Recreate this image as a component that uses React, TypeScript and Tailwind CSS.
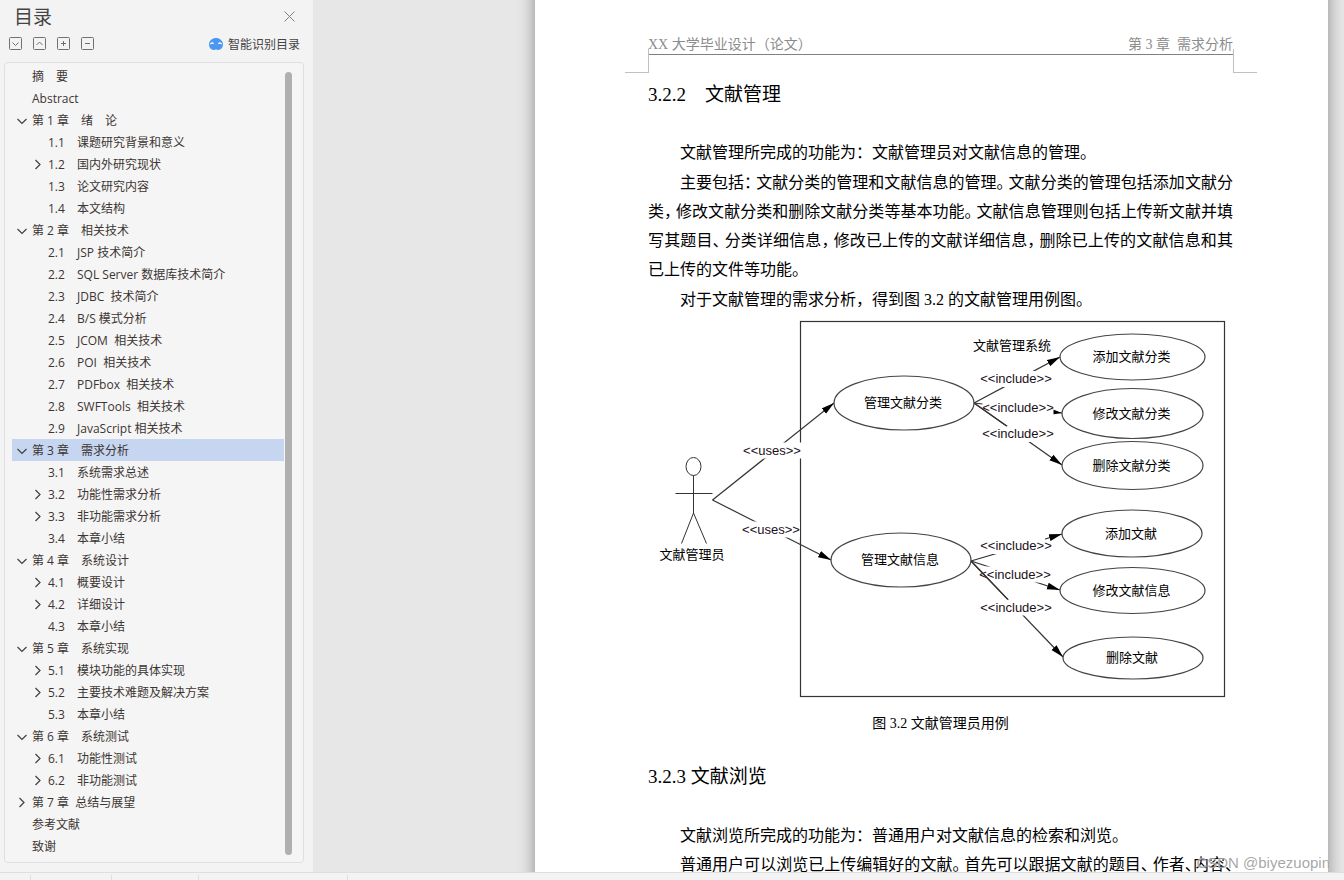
import React from "react";

type Entry = {
  num?: string;
  title: string;
  level: 1 | 2;
  state?: "open" | "closed";
  active?: boolean;
};

const entries: Entry[] = [
  { title: "摘　要", level: 1 },
  { title: "Abstract", level: 1 },
  { title: "第 1 章　绪　论", level: 1, state: "open" },
  { num: "1.1", title: "课题研究背景和意义", level: 2 },
  { num: "1.2", title: "国内外研究现状", level: 2, state: "closed" },
  { num: "1.3", title: "论文研究内容", level: 2 },
  { num: "1.4", title: "本文结构", level: 2 },
  { title: "第 2 章　相关技术", level: 1, state: "open" },
  { num: "2.1", title: "JSP 技术简介", level: 2 },
  { num: "2.2", title: "SQL Server 数据库技术简介", level: 2 },
  { num: "2.3", title: "JDBC  技术简介", level: 2 },
  { num: "2.4", title: "B/S 模式分析", level: 2 },
  { num: "2.5", title: "JCOM  相关技术", level: 2 },
  { num: "2.6", title: "POI  相关技术", level: 2 },
  { num: "2.7", title: "PDFbox  相关技术", level: 2 },
  { num: "2.8", title: "SWFTools  相关技术", level: 2 },
  { num: "2.9", title: "JavaScript 相关技术", level: 2 },
  { title: "第 3 章　需求分析", level: 1, state: "open", active: true },
  { num: "3.1", title: "系统需求总述", level: 2 },
  { num: "3.2", title: "功能性需求分析", level: 2, state: "closed" },
  { num: "3.3", title: "非功能需求分析", level: 2, state: "closed" },
  { num: "3.4", title: "本章小结", level: 2 },
  { title: "第 4 章　系统设计", level: 1, state: "open" },
  { num: "4.1", title: "概要设计", level: 2, state: "closed" },
  { num: "4.2", title: "详细设计", level: 2, state: "closed" },
  { num: "4.3", title: "本章小结", level: 2 },
  { title: "第 5 章　系统实现", level: 1, state: "open" },
  { num: "5.1", title: "模块功能的具体实现", level: 2, state: "closed" },
  { num: "5.2", title: "主要技术难题及解决方案", level: 2, state: "closed" },
  { num: "5.3", title: "本章小结", level: 2 },
  { title: "第 6 章　系统测试", level: 1, state: "open" },
  { num: "6.1", title: "功能性测试", level: 2, state: "closed" },
  { num: "6.2", title: "非功能测试", level: 2, state: "closed" },
  { title: "第 7 章  总结与展望", level: 1, state: "closed" },
  { title: "参考文献", level: 1 },
  { title: "致谢", level: 1 },
];

const tools = [
  { label: "展开", d: "M3.5 5.5 6.5 8.5 9.5 5.5" },
  { label: "收起", d: "M3.5 8 6.5 5 9.5 8" },
  { label: "增加级别", d: "M6.5 4v5M4 6.5h5" },
  { label: "减少级别", d: "M4 6.5h5" },
];

function Chevron({ state }: { state?: "open" | "closed" }) {
  if (!state) return <span className="w-3 shrink-0" />;
  return (
    <button
      type="button"
      aria-label={state === "open" ? "折叠" : "展开"}
      className="flex h-3 w-3 shrink-0 items-center justify-center"
    >
      <svg width="12" height="12" viewBox="0 0 12 12" fill="none" stroke="#404040" strokeWidth="1.2">
        <path d={state === "open" ? "M1.5 4 6 8.5 10.5 4" : "M3.5 1 8 5.5 3.5 10"} />
      </svg>
    </button>
  );
}

function Sidebar() {
  return (
    <aside className="flex w-[313px] shrink-0 flex-col bg-[#f3f3f3] font-['Open_Sans','Noto_Sans_CJK_SC',sans-serif] text-xs text-[#3c3533]">
      <div className="flex h-[33px] items-center justify-between pl-[14px] pr-[18px]">
        <h1 className="text-[19px] leading-7 text-[#444444]">目录</h1>
        <button type="button" aria-label="关闭">
          <svg width="11" height="11" viewBox="0 0 11 11" fill="none" stroke="#808080" strokeWidth="1">
            <path d="M.5.5l10 10M10.5.5l-10 10" />
          </svg>
        </button>
      </div>
      <div className="flex h-[21px] items-center justify-between pl-[9px] pr-[13px]">
        <div className="flex gap-[11px]">
          {tools.map((t) => (
            <button key={t.label} type="button" aria-label={t.label}>
              <svg width="13" height="13" viewBox="0 0 13 13" fill="none" stroke="#707070" strokeWidth="1">
                <rect x=".5" y=".5" width="12" height="12" rx="1" />
                <path d={t.d} />
              </svg>
            </button>
          ))}
        </div>
        <button type="button" className="flex items-center gap-[5px] text-[#444444]">
          <svg width="14" height="12" viewBox="0 0 14 12">
            <path
              d="M7 0C10.5 0 14 2.6 14 6.3 14 10 11.5 12 9.3 12 8.2 12 7.8 11.4 7 11.4S5.8 12 4.7 12C2.5 12 0 10 0 6.3 0 2.6 3.5 0 7 0Z"
              fill="#4a98f0"
            />
            <path d="M1.2 6 3.4 4.8 4.6 5.800M9.400 5.800 10.600 4.800 12.800 6" fill="none" stroke="#ffffff" strokeWidth="1.200" />
          </svg>
          <span className="pt-[2px] leading-5">智能识别目录</span>
        </button>
      </div>
      <nav
        aria-label="目录"
        className="ml-1 mr-[9px] mt-2 flex rounded border border-[#dfdfdf] bg-[#f5f5f5] pb-[5px] pl-[7px] pr-[11px] pt-[2px]"
      >
        <ul className="mr-px flex-1">
          {entries.map((e, i) => (
            <li
              key={i}
              className={`flex h-[22px] items-center gap-1 pt-[2px] ${e.level === 1 ? "pl-1" : "pl-5"} ${
                e.active ? "bg-[#c7d6f0]" : ""
              }`}
            >
              <Chevron state={e.state} />
              <a href="#" className="flex whitespace-pre leading-5">
                {e.num && <span className="w-[29px]">{e.num}</span>}
                <span>{e.title}</span>
              </a>
            </li>
          ))}
        </ul>
        <div className="mb-[2px] mt-[7px] w-[7px] rounded-full bg-[#b0b0b2]" />
      </nav>
    </aside>
  );
}

/* Half-width punctuation, as set in a compressed line. */
function P({ children, tight }: { children: React.ReactNode; tight?: boolean }) {
  return <span className={`[font-feature-settings:'halt'] ${tight ? "" : "mr-1"}`}>{children}</span>;
}

function Line({ children, indent }: { children: React.ReactNode; indent?: boolean }) {
  return (
    <span className={`block whitespace-nowrap [text-align-last:justify] ${indent ? "pl-8" : ""}`}>{children}</span>
  );
}

const useCases = [
  { x: 904, y: 403, rx: 70, ry: 27, t: "管理文献分类" },
  { x: 901, y: 560, rx: 70, ry: 27, t: "管理文献信息" },
  { x: 1132.5, y: 357, rx: 72.5, ry: 23, t: "添加文献分类" },
  { x: 1132.5, y: 413.5, rx: 70.5, ry: 25, t: "修改文献分类" },
  { x: 1132.5, y: 465.5, rx: 70.5, ry: 24, t: "删除文献分类" },
  { x: 1132, y: 533.5, rx: 70, ry: 23.5, t: "添加文献" },
  { x: 1132.5, y: 590.5, rx: 72.5, ry: 23, t: "修改文献信息" },
  { x: 1133, y: 658, rx: 70, ry: 21, t: "删除文献" },
];

/* Drawn in order: a later line may run across an earlier label. */
const links = [
  { x1: 712.5, y1: 500, x2: 834, y2: 403, lx: 772, ly: 450.5, w: 60, t: "<<uses>>" },
  { x1: 712.5, y1: 500, x2: 831, y2: 560, lx: 771, ly: 529.5, w: 58, t: "<<uses>>" },
  { x1: 974, y1: 403, x2: 1060, y2: 357, lx: 1016, ly: 379, w: 70, t: "<<include>>" },
  { x1: 974, y1: 403, x2: 1062, y2: 413, lx: 1018, ly: 407.5, w: 71, t: "<<include>>" },
  { x1: 974, y1: 403, x2: 1062, y2: 465, lx: 1018, ly: 434, w: 70, t: "<<include>>" },
  { x1: 971, y1: 561, x2: 1062, y2: 534, lx: 1016, ly: 546, w: 58, t: "<<include>>" },
  { x1: 971, y1: 561, x2: 1060, y2: 590, lx: 1015, ly: 574.5, w: 70, t: "<<include>>" },
  { x1: 971, y1: 561, x2: 1063, y2: 657, lx: 1016, ly: 607.5, w: 70, t: "<<include>>" },
];

function Diagram() {
  return (
    <svg
      viewBox="648 314 585 396"
      className="block w-full font-['Liberation_Sans','Noto_Sans_CJK_SC',sans-serif] text-[13px]"
      role="img"
      aria-label="文献管理用例图"
      textAnchor="middle"
    >
      <defs>
        <marker id="arrow" markerWidth="13" markerHeight="8" refX="13" refY="4" orient="auto" markerUnits="userSpaceOnUse">
          <path d="M0 .5 13 4 0 7.5Z" fill="#000" />
        </marker>
      </defs>
      <rect x="800.5" y="321.5" width="424" height="375" fill="none" stroke="#333" strokeWidth="1.2" />
      <g fill="none" stroke="#333">
        <ellipse cx="693.5" cy="466.5" rx="7.5" ry="9" />
        <path d="M693.5 475.5V513.5M675.5 493.500H712.500M693.500 513 681.500 543.500M693.500 513 706.500 543.500" />
      </g>
      <text x="692" y="559">文献管理员</text>
      <text x="1012" y="350">文献管理系统</text>
      {links.map((l, i) => (
        <g key={i}>
          <line x1={l.x1} y1={l.y1} x2={l.x2} y2={l.y2} stroke="#333" strokeWidth="1.2" markerEnd="url(#arrow)" />
          <rect x={l.lx - l.w / 2} y={l.ly - 8} width={l.w} height="16" fill="#fff" />
          <text x={l.lx} y={l.ly + 4} fill="#1a1020">
            {l.t}
          </text>
        </g>
      ))}
      <path d="M974 403 1007 426.3M971 561 1008 599.6" stroke="#333" strokeWidth="1.2" />
      {useCases.map((u) => (
        <g key={u.t + u.y}>
          <ellipse cx={u.x} cy={u.y} rx={u.rx} ry={u.ry} fill="none" stroke="#444" strokeWidth="1.2" />
          <text x={u.x - 1} y={u.y + 4}>
            {u.t}
          </text>
        </g>
      ))}
    </svg>
  );
}

function Page() {
  return (
    <article className="-mt-8 min-h-[1122px] min-w-0 max-w-[794px] flex-1 bg-white pl-[113px] pr-[95px] pt-[68px] font-['Liberation_Serif','Noto_Sans_CJK_SC',serif] text-base leading-[29px] text-black shadow-[0_0_16px_rgba(0,0,0,0.4)]">
      <header className="relative flex justify-between whitespace-pre border-b border-[#808080] text-sm leading-[18px] text-[#8c8c8c]">
        <span>XX 大学毕业设计（论文）</span>
        <span>第 3 章  需求分析</span>
        <i className="absolute -left-[23px] top-[13px] h-6 w-6 border-b border-r border-[#c0c0c0]" />
        <i className="absolute -right-6 top-[13px] h-6 w-6 border-b border-l border-[#c0c0c0]" />
      </header>
      <h2 className="mt-[26px] text-[19px] leading-7">3.2.2　文献管理</h2>
      <div className="mt-[29px] space-y-px">
        <p className="indent-8">文献管理所完成的功能为：文献管理员对文献信息的管理。</p>
        <p>
          <Line indent>
            主要包括<P>：</P>文献分类的管理和文献信息的管理<P>。</P>文献分类的管理包括添加文献分
          </Line>
          <Line>
            类<P>，</P>修改文献分类和删除文献分类等基本功能<P>。</P>文献信息管理则包括上传新文献并填
          </Line>
          <Line>
            写其题目<P>、</P>分类详细信息<P>，</P>修改已上传的文献详细信息<P>，</P>删除已上传的文献信息和其
          </Line>
          <span className="block">已上传的文件等功能。</span>
        </p>
        <p className="indent-8">对于文献管理的需求分析，得到图 3.2 的文献管理用例图。</p>
      </div>
      <figure>
        <Diagram />
        <figcaption className="text-center text-sm leading-7">图 3.2 文献管理员用例</figcaption>
      </figure>
      <h2 className="mt-[25px] text-[19px] leading-7">3.2.3 文献浏览</h2>
      <div className="mt-[30px]">
        <p className="indent-8">文献浏览所完成的功能为：普通用户对文献信息的检索和浏览。</p>
        <p>
          <Line indent>
            普通用户可以浏览已上传编辑好的文献<P>。</P>首先可以跟据文献的题目<P>、</P>作者<P tight>、</P>内容
            <P tight>、</P>
          </Line>
        </p>
      </div>
    </article>
  );
}

export default function App() {
  return (
    <div className="relative flex h-screen flex-col overflow-hidden bg-[#f3f3f3]">
      <div className="flex min-h-0 flex-1">
        <Sidebar />
        <main className="flex min-w-0 flex-1 items-start overflow-hidden bg-[#e7e7e7] pl-[222px] pr-4">
          <Page />
        </main>
      </div>
      <footer className="flex h-2 shrink-0 border-t border-[#dedede] pt-[2px]">
        <span className="w-[31px] border-r border-[#dedede]" />
        <span className="w-[81px] border-r border-[#dedede]" />
        <span className="w-[87px] border-r border-[#dedede]" />
        <span className="w-[149px] border-r border-[#dedede]" />
      </footer>
      <div className="absolute bottom-[7px] right-[14px] font-['Liberation_Sans',sans-serif] text-[15px] leading-5 text-[#808080]/70 [text-shadow:0_0_1px_#fff]">
        CSDN @biyezuopin
      </div>
    </div>
  );
}
